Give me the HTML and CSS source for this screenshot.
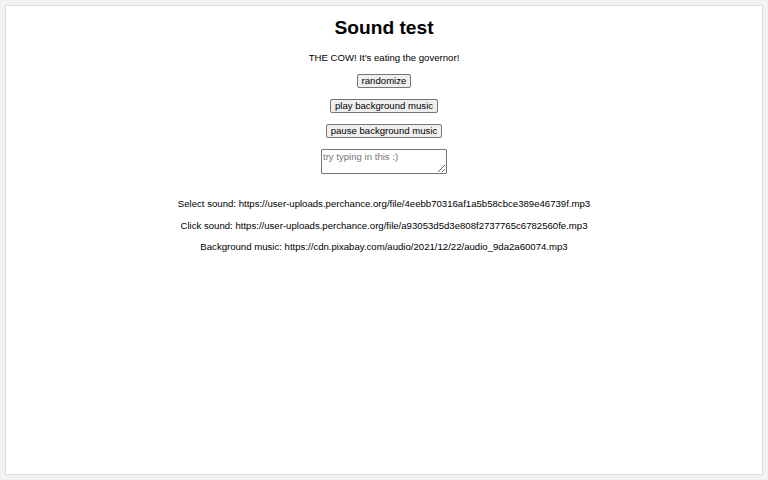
FILE: index.html
```html
<!DOCTYPE html>
<html lang="en">
  <head>
    <meta charset="UTF-8" />
    <meta name="viewport" content="width=device-width, initial-scale=1.0" />
    <title>Sound test</title>
    <link rel="stylesheet" href="styles.css">
  </head>
  <body>
    <div class="frame">
      <h1 class="title">Sound test</h1>
      <p class="output" id="output">THE COW! It's eating the governor!</p>
      <div class="row first"><button id="randomize">randomize</button></div>
      <div class="row"><button id="play">play background music</button></div>
      <div class="row"><button id="pause">pause background music</button></div>
      <div class="row"><textarea placeholder="try typing in this :)"></textarea></div>

      <div class="credits">
        <p>Select sound: https://user-uploads.perchance.org/file/4eebb70316af1a5b58cbce389e46739f.mp3</p>
        <p>Click sound: https://user-uploads.perchance.org/file/a93053d5d3e808f2737765c6782560fe.mp3</p>
        <p>Background music: https://cdn.pixabay.com/audio/2021/12/22/audio_9da2a60074.mp3</p>
      </div>
    </div>

    <script>
      const output = document.querySelector("#output");
      const lines = [
        "THE COW! It's eating the governor!",
        "The duck has stolen a tractor.",
        "A goose is running for mayor.",
      ];
      let i = 0;

      // 👉 cycle through the silly sentences
      document.querySelector("#randomize").addEventListener("click", () => {
        i = (i + 1) % lines.length;
        output.textContent = lines[i];
      });
    </script>
  </body>
</html>
```

FILE: styles.css
```css
* {
  box-sizing: border-box;
}
html,
body {
  margin: 0;
  height: 100%;
  background-color: #f2f2f2;
}
body {
  padding: 5px;
  font-family: "Liberation Sans", Arial, sans-serif;
  color: #000;
}
.frame {
  height: 470px;
  background-color: #fff;
  border: 1px solid #dcdcdc;
  text-align: center;
  padding-top: 10px;
}
.title {
  font-size: 19.2px;
  font-weight: bold;
  margin: 0;
  line-height: 24px;
}
.output {
  font-size: 9.6px;
  margin: 12px 0 0;
  line-height: 12px;
}
.row {
  margin-top: 11px;
  line-height: 0;
}
.row.first {
  margin-top: 10px;
}
button {
  font-family: "Liberation Sans", Arial, sans-serif;
  font-size: 9.6px;
  line-height: 12px;
  padding: 0 4px;
  height: 14px;
  background-color: #efefef;
  border: 1px solid #767676;
  border-radius: 2px;
  color: #000;
}
textarea {
  font-family: "Liberation Sans", Arial, sans-serif;
  font-size: 9.6px;
  width: 126px;
  height: 25px;
  padding: 1px;
  border: 1px solid #767676;
  border-radius: 1px;
  resize: vertical;
}
textarea::placeholder {
  color: #777;
}
.credits {
  margin-top: 24px;
}
.credits p {
  font-size: 9.6px;
  line-height: 11.5px;
  margin: 0 0 10px;
}
```
